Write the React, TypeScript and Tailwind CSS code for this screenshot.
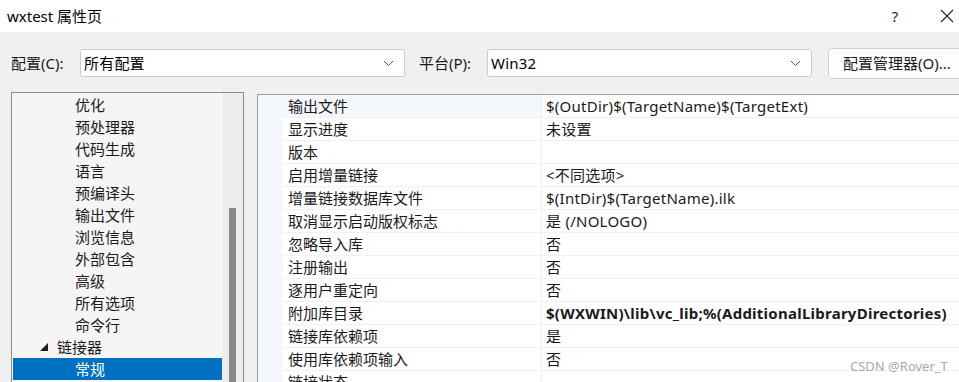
import React from 'react';

const font = { fontFamily: '"Noto Sans", "Noto Sans CJK SC", sans-serif' };

const treeItems = [
  '优化',
  '预处理器',
  '代码生成',
  '语言',
  '预编译头',
  '输出文件',
  '浏览信息',
  '外部包含',
  '高级',
  '所有选项',
  '命令行',
];

const props: { name: string; value: string; bold?: boolean }[] = [
  { name: '输出文件', value: '$(OutDir)$(TargetName)$(TargetExt)' },
  { name: '显示进度', value: '未设置' },
  { name: '版本', value: '' },
  { name: '启用增量链接', value: '<不同选项>' },
  { name: '增量链接数据库文件', value: '$(IntDir)$(TargetName).ilk' },
  { name: '取消显示启动版权标志', value: '是 (/NOLOGO)' },
  { name: '忽略导入库', value: '否' },
  { name: '注册输出', value: '否' },
  { name: '逐用户重定向', value: '否' },
  { name: '附加库目录', value: '$(WXWIN)\\lib\\vc_lib;%(AdditionalLibraryDirectories)', bold: true },
  { name: '链接库依赖项', value: '是' },
  { name: '使用库依赖项输入', value: '否' },
  { name: '链接状态', value: '' },
];

function Chevron() {
  return (
    <svg width="11" height="7" viewBox="0 0 11 7" className="text-[#555]">
      <path d="M1 1l4.5 4.5L10 1" fill="none" stroke="currentColor" strokeWidth="1" />
    </svg>
  );
}

function Select({ value }: { value: string }) {
  return (
    <div className="w-[325px] shrink-0 h-[28px] bg-white border border-[#cbcbcb] rounded-[3px] flex items-center justify-between pl-[3px] pr-[10px]">
      <span className="text-[15px] text-black tracking-[0.2px]">{value}</span>
      <Chevron />
    </div>
  );
}

export default function App() {
  return (
    <div className="relative w-[959px] h-[382px] overflow-hidden bg-[#f0f0f0] text-[#1a1a1a] flex flex-col" style={font}>
      {/* title bar */}
      <div className="h-[32px] shrink-0 bg-white flex items-center justify-between pl-[7px]">
        <span className="text-[15px] text-black">wxtest 属性页</span>
        <div className="flex items-center">
          <span className="text-[15px] text-[#222] w-[20px] text-center mr-[35px]">?</span>
          <svg width="14" height="14" viewBox="0 0 14 14" className="mr-[5px]">
            <path d="M1 1l12 12M13 1L1 13" stroke="#222" strokeWidth="1.1" />
          </svg>
        </div>
      </div>

      {/* config row */}
      <div className="h-[60px] shrink-0 flex items-center pl-[11px] pt-[2px] overflow-hidden">
        <span className="text-[15px] w-[69px] shrink-0">配置(C):</span>
        <Select value="所有配置" />
        <span className="text-[15px] ml-[14px] w-[68px] shrink-0">平台(P):</span>
        <Select value="Win32" />
        <div className="ml-[16px] h-[31px] w-[150px] shrink-0 bg-[#fdfdfd] border border-[#d0d0d0] rounded-[4px] flex items-center pl-[14px] text-[15px]">
          配置管理器(O)...
        </div>
      </div>

      {/* panels */}
      <div className="flex-1 flex pl-[11px] min-h-0">
        {/* tree */}
        <div className="w-[233px] shrink-0 border border-[#8c8c8c] border-b-0 bg-[#f5f5f5] flex">
          <div className="flex-1 pt-[1px]">
            {treeItems.map((t) => (
              <div key={t} className="h-[22px] flex items-center pl-[63px] text-[15px] leading-none">
                {t}
              </div>
            ))}
            <div className="h-[22px] flex items-center pl-[28px] text-[15px] leading-none">
              <svg width="8" height="8" viewBox="0 0 8 8" className="mr-[9px]">
                <path d="M8 0V8H0Z" fill="#1e1e1e" />
              </svg>
              链接器
            </div>
            <div className="h-[22px] flex items-center pl-[62px] text-[15px] leading-none bg-[#0070c0] text-white ml-[1px]">
              常规
            </div>
          </div>
          <div className="w-[21px] bg-[#ededed] flex justify-center pt-[115px]">
            <div className="w-[7px] bg-[#888888] h-full" />
          </div>
        </div>

        {/* property grid */}
        <div className="flex-1 ml-[13px] mt-[2px] border-l border-t border-[#a0a0a0] bg-[#f4f7fc] flex flex-col">
          {props.map((p, i) => (
            <div key={p.name} className="h-[23px] shrink-0 flex text-[15px] leading-none">
              <div
                className={`ml-[25px] w-[258px] shrink-0 flex items-center pl-[5px] border-b border-[#eef1f5] ${
                  i === 0 ? 'bg-[#f4f7fc]' : 'bg-white'
                }`}
              >
                {p.name}
              </div>
              <div
                className={`flex-1 flex items-center pl-[4px] bg-white border-l border-b border-[#eef1f5] tracking-[0.25px] ${
                  p.bold ? 'font-bold' : ''
                }`}
              >
                {p.value}
              </div>
            </div>
          ))}
        </div>
      </div>

      <div className="absolute left-[850px] top-[357px] text-[13px] text-[#a9a9a9]">
        CSDN @Rover_T
      </div>
    </div>
  );
}
